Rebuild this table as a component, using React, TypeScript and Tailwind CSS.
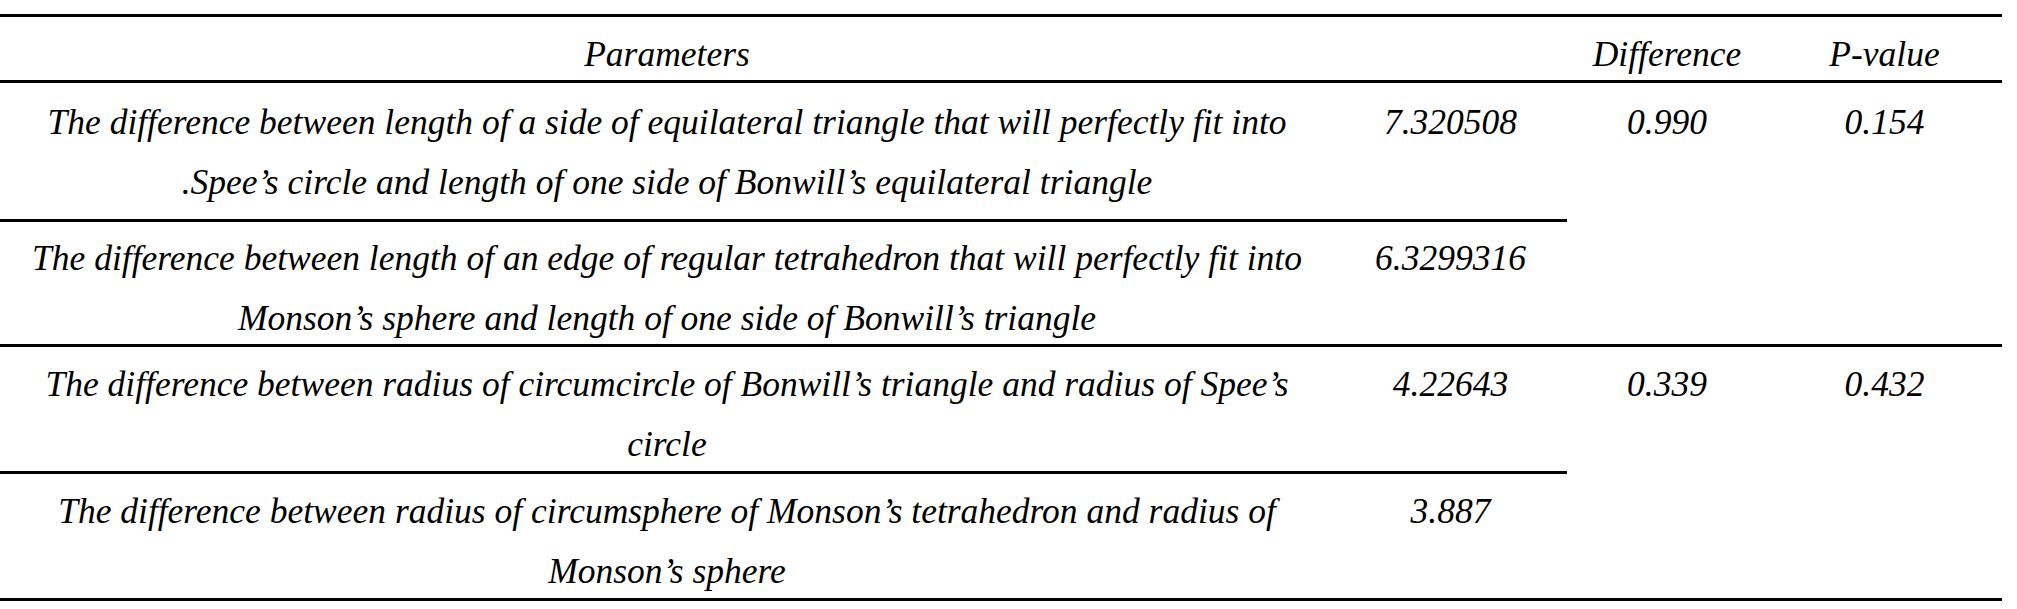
const rows = [
  {
    text: ["The difference between length of a side of equilateral triangle that will perfectly fit into", ".Spee’s circle and length of one side of Bonwill’s equilateral triangle"],
    value: "7.320508",
    diff: "0.990",
    p: "0.154",
    pad: "pt-[9px]",
  },
  {
    text: ["The difference between length of an edge of regular tetrahedron that will perfectly fit into", "Monson’s sphere and length of one side of Bonwill’s triangle"],
    value: "6.3299316",
    pad: "pt-[6px]",
  },
  {
    text: ["The difference between radius of circumcircle of Bonwill’s triangle and radius of Spee’s", "circle"],
    value: "4.22643",
    diff: "0.339",
    p: "0.432",
    pad: "pt-[7px]",
  },
  {
    text: ["The difference between radius of circumsphere of Monson’s tetrahedron and radius of", "Monson’s sphere"],
    value: "3.887",
    pad: "pt-[7px]",
  },
];

const cell = "border-b-[3px] border-black text-center leading-[60px]";

export default function App() {
  return (
    <div className="h-[609px] w-[2017px] bg-white pt-[14px]">
      <div className="grid w-[2002px] grid-cols-[1334px_233px_200px_235px] grid-rows-[66px_139px_125px_127px_127px] border-t-[3px] border-black font-['Liberation_Serif',serif] text-[35.5px] italic text-black">
        <div className={`${cell} pt-[7px]`}>Parameters</div>
        <div className={cell}></div>
        <div className={`${cell} pt-[7px]`}>Difference</div>
        <div className={`${cell} pt-[7px]`}>P-value</div>
        {rows.map((r, i) => (
          <Row key={i} {...r} />
        ))}
      </div>
    </div>
  );
}

function Row({ text, value, diff, p, pad }: { text: string[]; value: string; diff?: string; p?: string; pad: string }) {
  return (
    <>
      <div className={`${cell} ${pad}`}>
        {text[0]}
        <br />
        {text[1]}
      </div>
      <div className={`${cell} ${pad}`}>{value}</div>
      {diff !== undefined && <div className={`${cell} ${pad} row-span-2`}>{diff}</div>}
      {p !== undefined && <div className={`${cell} ${pad} row-span-2`}>{p}</div>}
    </>
  );
}
